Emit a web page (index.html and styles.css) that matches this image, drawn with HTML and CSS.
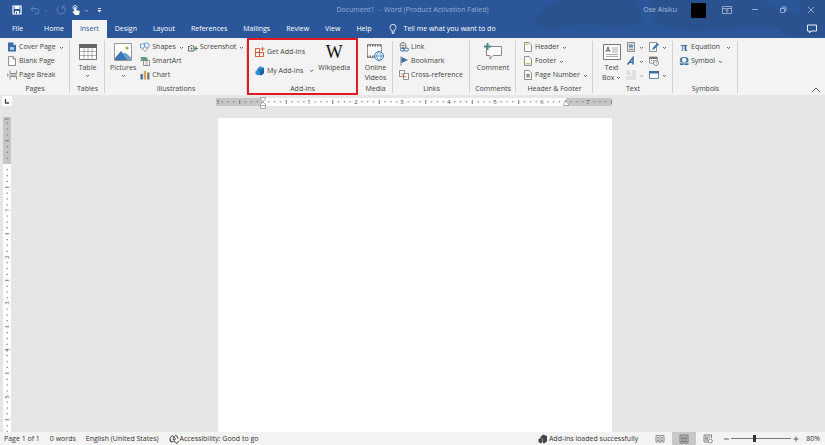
FILE: index.html
```html
<!DOCTYPE html>
<html lang="en">
<head>
    <meta charset="UTF-8">
    <meta name="viewport" content="width=device-width, initial-scale=1.0">
    <title>Document1 - Word</title>
    <link rel="stylesheet" href="styles.css">
</head>
<body>
    <svg class="defs" aria-hidden="true">
        <symbol id="caret" viewBox="0 0 5 5"><path d="M1 2l1.5 1.5L4 2" fill="none" stroke="currentColor" stroke-width=".8"/></symbol>
    </svg>

    <header class="app-header">
        <svg class="clouds" viewBox="0 0 290 38" aria-hidden="true">
            <path d="M2 24C0 12 14 2 30 0h70c8 6 2 12 10 18 4 6-20 10-40 8-14-2-20-4-34 0-16 4-32 4-34-2z"/>
            <path d="M118 0h110c8 4 6 10 26 12 16 2 14 10 6 14-20 4-40-2-60 2-24 4-60 4-74-2-10-6-12-16-8-26z"/>
            <path d="M254 20c-8 2-12 8-8 12 8 6 30 4 44 4V0h-24c0 10-4 18-12 20z"/>
        </svg>

        <div class="title-bar">
            <div class="quick-access">
                <button class="icon-btn" aria-label="Save">
                    <svg class="ico" viewBox="0 0 10 10"><path d="M1 1h8v8H1z" fill="none" stroke="#fff" stroke-width="1.2"/><path d="M2.5 1h5v3h-5zM3 6h4v3H3z" fill="#fff"/><path d="M4 7h1v2H4z" fill="#2b579a"/></svg>
                </button>
                <button class="icon-btn dim" aria-label="Undo">
                    <svg class="ico" viewBox="0 0 10 10"><path d="M3.5 1L1 3.5 3.5 6M1 3.5h5a2.5 2.5 0 0 1 0 5.5H5" fill="none" stroke="currentColor"/></svg>
                    <svg class="caret"><use href="#caret"/></svg>
                </button>
                <button class="icon-btn dim" aria-label="Repeat">
                    <svg class="ico" viewBox="0 0 10 10"><path d="M3 1.5a4 4 0 1 0 4 0M9.500 1H6.500v3" fill="none" stroke="currentColor"/></svg>
                </button>
                <button class="icon-btn touch" aria-label="Touch mode">
                    <svg class="ico" viewBox="0 0 10 10"><circle cx="4" cy="2.500" r="2" fill="none" stroke="#fff" stroke-width=".8"/><path d="M3.300 2h1.400v3l3.300.8c.7.2.8.7.6 1.300L8 10H4L1.500 6.800l.8-.8 1 .8z" fill="#fff"/></svg>
                    <svg class="caret"><use href="#caret"/></svg>
                </button>
                <button class="icon-btn" aria-label="Customize toolbar">
                    <svg class="caret" viewBox="0 0 5 5"><path d="M1 .5h3" stroke="#fff" stroke-width=".8"/><path d="M.5 2h4l-2 2.500z" fill="#fff"/></svg>
                </button>
            </div>
            <div class="doc-title">Document1 &nbsp;-&nbsp; Word (Product Activation Failed)</div>
            <div class="window-tools">
                <span class="user-name">Ose Aisiku</span>
                <span class="avatar"></span>
                <button class="win-btn" aria-label="Ribbon display options"><svg class="ico" viewBox="0 0 10 10"><path d="M.5 1.500h9v7h-9zM.5 3.500h9M5 8V4.500M3.500 6L5 4.500 6.500 6" fill="none" stroke="currentColor" stroke-width=".8"/></svg></button>
                <button class="win-btn" aria-label="Minimize"><svg class="ico" viewBox="0 0 10 10"><path d="M2 4.500h6" stroke="currentColor" stroke-width=".8"/></svg></button>
                <button class="win-btn" aria-label="Restore"><svg class="ico" viewBox="0 0 10 10"><path d="M2.500 3.500h4v4h-4zM4 3.500V2h4v4H6.500" fill="none" stroke="currentColor" stroke-width=".8"/></svg></button>
                <button class="win-btn" aria-label="Close"><svg class="ico" viewBox="0 0 10 10"><path d="M2 2l6 6M8 2L2 8" stroke="currentColor" stroke-width=".8"/></svg></button>
            </div>
        </div>

        <nav class="tabs">
            <button class="tab file">File</button>
            <button class="tab">Home</button>
            <button class="tab active">Insert</button>
            <button class="tab">Design</button>
            <button class="tab">Layout</button>
            <button class="tab">References</button>
            <button class="tab">Mailings</button>
            <button class="tab">Review</button>
            <button class="tab">View</button>
            <button class="tab">Help</button>
            <button class="tab tell-me">
                <svg class="ico" viewBox="0 0 10 10"><path d="M3.500 7C3.500 5.500 2 5 2 3.300a3 3 0 0 1 6 0C8 5 6.500 5.500 6.500 7zM3.500 8.300h3M4 9.600h2" fill="none" stroke="#fff" stroke-width=".8"/></svg>
                Tell me what you want to do
            </button>
            <button class="comments-btn" aria-label="Comments"><svg class="ico" viewBox="0 0 10 10"><path d="M.5 1h9v6H4L2.500 9V7h-2z" fill="none" stroke="#fff" stroke-width=".9"/></svg></button>
        </nav>
    </header>

    <section class="ribbon">
        <div class="group pages">
            <div class="group-body">
                <div class="stack">
                    <button class="cmd"><svg class="ico" viewBox="0 0 10 10"><path d="M1 .5h5.500L9 3v6.500H1z" fill="#3a6ea5"/><path d="M6.500.5V3H9z" fill="#fff"/><path d="M3 5h4v3H3z" fill="#a9c6e3"/></svg>Cover Page<svg class="caret"><use href="#caret"/></svg></button>
                    <button class="cmd"><svg class="ico" viewBox="0 0 10 10"><path d="M1.500.5h4.500l2.500 2.500v6.500h-7zM6 .5V3h2.500" fill="#fff" stroke="#777" stroke-width=".8"/></svg>Blank Page</button>
                    <button class="cmd"><svg class="ico" viewBox="0 0 10 10"><path d="M3 .5V3.500h6.500V.5M3 9.500V6.500h6.500v3M2.500 5H10M0 5h2M0 3v4" fill="none" stroke="#777" stroke-width=".8"/></svg>Page Break</button>
                </div>
            </div>
            <div class="group-label">Pages</div>
        </div>

        <div class="group tables">
            <div class="group-body">
                <button class="big">
                    <svg class="big-ico" viewBox="0 0 18 18"><path d="M.5 1.500h17v15H.5z" fill="#fff" stroke="#777"/><path d="M0 1h18v4H0z" fill="#666"/><path d="M1 8.500h16M1 12.500h16M5 5v11M9 5v11M13 5v11" stroke="#999" stroke-width=".8"/></svg>
                    <span>Table</span>
                    <svg class="caret"><use href="#caret"/></svg>
                </button>
            </div>
            <div class="group-label">Tables</div>
        </div>

        <div class="group illustrations">
            <div class="group-body">
                <button class="big">
                    <svg class="big-ico" viewBox="0 0 18 18"><path d="M.5.5h17v17H.5z" fill="#fff" stroke="#999"/><circle cx="13" cy="5" r="1.500" fill="#8db04a"/><path d="M1 15l6-7 4 5 2-2 4 4v2H1z" fill="#3a78b5"/><path d="M9 11l2-1.500 6 5.500v2h-4z" fill="#71a3d0"/></svg>
                    <span>Pictures</span>
                    <svg class="caret"><use href="#caret"/></svg>
                </button>
                <div class="stack">
                    <button class="cmd"><svg class="ico" viewBox="0 0 10 10"><circle cx="6.500" cy="3.500" r="2.800" fill="#e7f0fa" stroke="#4a86c5" stroke-width=".8"/><path d="M.5 2h4v4h-4z" fill="#fff" stroke="#4a86c5" stroke-width=".8"/><path d="M5 4.500L7.500 7 5 9.500 2.500 7z" fill="#fff" stroke="#777" stroke-width=".8"/></svg>Shapes<svg class="caret"><use href="#caret"/></svg></button>
                    <button class="cmd"><svg class="ico" viewBox="0 0 10 10"><path d="M0 1h6l2 2-2 2H0l1.500-2z" fill="#5b9b80"/><path d="M3.500 4.500h6v5h-6z" fill="#fff" stroke="#777" stroke-width=".8"/><path d="M5 6h3M5 8h3" stroke="#777" stroke-width=".7"/></svg>SmartArt</button>
                    <button class="cmd"><svg class="ico" viewBox="0 0 10 10"><path d="M.5 4h2.300v5.500H.5z" fill="#3a6ea5"/><path d="M3.800 1h2.300v8.500H3.800z" fill="#e3a24f"/><path d="M7.200 2.500h2.300v7H7.200z" fill="#777"/></svg>Chart</button>
                </div>
                <div class="stack">
                    <button class="cmd"><svg class="ico" viewBox="0 0 10 10"><path d="M.5 4.500h1.500l.7-1h1.600l.7 1h1v4.500H.5z" fill="none" stroke="#666"/><circle cx="3.500" cy="6.500" r="1" fill="#666"/><path d="M8 4.500v4M6 6.500h4" stroke="#3f8b68" stroke-width="1.200"/></svg>Screenshot<svg class="caret"><use href="#caret"/></svg></button>
                </div>
            </div>
            <div class="group-label">Illustrations</div>
        </div>

        <div class="group addins">
            <div class="group-body">
                <div class="stack roomy">
                    <button class="cmd"><svg class="ico" viewBox="0 0 10 10"><path d="M.5 1.500h4v8h-4zM.5 5.500h8v4h-8zM7.500 0v4M5.500 2h4" fill="none" stroke="#d8613c"/></svg>Get Add-ins</button>
                    <button class="cmd"><svg class="ico" viewBox="0 0 10 10"><path d="M5 .5l4 1.500v5.500L6 9.500 3 8V4L2 3.500z" fill="#1266a8"/><path d="M.5 5L3 4l2 1v3L3 9.500.5 8z" fill="#2f8fd8"/><path d="M5 .5l4 1.500-2.500 1.500L2 3.500z" fill="#2f8fd8"/></svg>My Add-ins<svg class="caret far"><use href="#caret"/></svg></button>
                </div>
                <button class="big">
                    <span class="wiki-mark" aria-hidden="true">W</span>
                    <span>Wikipedia</span>
                </button>
            </div>
            <div class="group-label">Add-ins</div>
        </div>

        <div class="group media">
            <div class="group-body">
                <button class="big">
                    <svg class="big-ico" viewBox="0 0 18 18"><path d="M1.500 1.500h14v13h-14z" fill="#fff" stroke="#999"/><path d="M1 2.500h15M1 13.500h9" stroke="#666" stroke-width="2" stroke-dasharray="1.500 1"/><circle cx="13" cy="13" r="4.500" fill="#e9f2fb" stroke="#3f7fbd"/><path d="M8.500 13h9M13 8.500c-3 3-3 6 0 9M13 8.500c3 3 3 6 0 9" fill="none" stroke="#3f7fbd" stroke-width=".7"/></svg>
                    <span>Online<br>Videos</span>
                </button>
            </div>
            <div class="group-label">Media</div>
        </div>

        <div class="group links">
            <div class="group-body">
                <div class="stack">
                    <button class="cmd"><svg class="ico" viewBox="0 0 10 10"><circle cx="4" cy="3.500" r="3" fill="#fff" stroke="#666" stroke-width=".8"/><path d="M1 3.500h6M4 .5v6" stroke="#666" stroke-width=".6"/><rect x="1.500" y="6" width="4" height="3" rx="1.500" fill="none" stroke="#3a6ea5"/><rect x="5" y="6" width="4.500" height="3" rx="1.500" fill="none" stroke="#3a6ea5"/></svg>Link</button>
                    <button class="cmd"><svg class="ico" viewBox="0 0 10 10"><path d="M2 .5v9" stroke="#777"/><path d="M2.500 1L9 4 2.500 7z" fill="#3a6ea5"/></svg>Bookmark</button>
                    <button class="cmd"><svg class="ico" viewBox="0 0 10 10"><path d="M.5.5h5v6h-5z" fill="#fff" stroke="#777" stroke-width=".8"/><path d="M4.500 3.500h5v6h-5z" fill="#fff" stroke="#777" stroke-width=".8"/><path d="M1.500 4h4M7 6.500H3.500M5 5l-1.500 1.500L5 8" fill="none" stroke="#c0694a" stroke-width=".8"/></svg>Cross-reference</button>
                </div>
            </div>
            <div class="group-label">Links</div>
        </div>

        <div class="group comments">
            <div class="group-body">
                <button class="big">
                    <svg class="big-ico" viewBox="0 0 18 18"><path d="M2.500 3.500h15v9H9L6 16v-3.500H2.500z" fill="#fff" stroke="#888"/><path d="M3.500 0v7M0 3.500h7" stroke="#4f8a86" stroke-width="2"/></svg>
                    <span>Comment</span>
                </button>
            </div>
            <div class="group-label">Comments</div>
        </div>

        <div class="group header-footer">
            <div class="group-body">
                <div class="stack">
                    <button class="cmd"><svg class="ico" viewBox="0 0 10 10"><path d="M1.500.5h4.500l2.500 2.500v6.500h-7z" fill="#fff" stroke="#777" stroke-width=".8"/><path d="M2.500 1.500h3v1.500h-3z" fill="#d3bd6a"/></svg>Header<svg class="caret"><use href="#caret"/></svg></button>
                    <button class="cmd"><svg class="ico" viewBox="0 0 10 10"><path d="M1.500.5h4.500l2.500 2.500v6.500h-7z" fill="#fff" stroke="#777" stroke-width=".8"/><path d="M2.500 7h5v1.500h-5z" fill="#d3bd6a"/></svg>Footer<svg class="caret"><use href="#caret"/></svg></button>
                    <button class="cmd"><svg class="ico" viewBox="0 0 10 10"><path d="M1.500.5h4.500l2.500 2.500v6.500h-7z" fill="#fff" stroke="#777" stroke-width=".8"/><path d="M4.300 3.500v4M5.800 3.500v4M3 4.800h4M3 6.300h4" stroke="#555" stroke-width=".6"/></svg>Page Number<svg class="caret"><use href="#caret"/></svg></button>
                </div>
            </div>
            <div class="group-label">Header &amp; Footer</div>
        </div>

        <div class="group text">
            <div class="group-body">
                <button class="big">
                    <svg class="big-ico" viewBox="0 0 18 18"><path d="M.5 1.500h17v15H.5z" fill="#fff" stroke="#777"/><path d="M3 9l2-5 2 5M3.700 7.500h2.600" fill="none" stroke="#555" stroke-width=".9"/><path d="M9 5h6M9 7h6M9 9h6M3 11.500h12M3 13.500h12" stroke="#999" stroke-width=".8"/></svg>
                    <span>Text<br>Box <svg class="caret"><use href="#caret"/></svg></span>
                </button>
                <div class="stack">
                    <button class="cmd" aria-label="Quick Parts"><svg class="ico" viewBox="0 0 10 10"><path d="M1.500.5h7v9h-7z" fill="#ddd" stroke="#777" stroke-width=".8"/><path d="M3 2.500h4v3H3z" fill="#6d8fb3"/><path d="M3 7.500h4" stroke="#777" stroke-width=".8"/></svg><svg class="caret"><use href="#caret"/></svg></button>
                    <button class="cmd" aria-label="WordArt"><svg class="ico" viewBox="0 0 10 10"><path d="M1.500 8.500L7 1.500v7M3.500 6.200h4" fill="none" stroke="#3a6ea5" stroke-width="1.500"/></svg><svg class="caret"><use href="#caret"/></svg></button>
                    <button class="cmd faded" aria-label="Drop Cap"><svg class="ico" viewBox="0 0 10 10"><path d="M.5 5l2-4.500 2 4.500M1.300 3.500h2.500M6 1h4M6 3h4M6 5h4M0 7h10M0 9h10" fill="none" stroke="#999" stroke-width=".8"/></svg><svg class="caret"><use href="#caret"/></svg></button>
                </div>
                <div class="stack">
                    <button class="cmd" aria-label="Signature Line"><svg class="ico" viewBox="0 0 10 10"><path d="M.5.5h7v9h-7z" fill="#fff" stroke="#777" stroke-width=".8"/><path d="M3 8l1-2.500L8.500 1 10 2.500 5.500 7z" fill="#3a78b5"/></svg><svg class="caret"><use href="#caret"/></svg></button>
                    <button class="cmd" aria-label="Date and Time"><svg class="ico" viewBox="0 0 10 10"><path d="M.5 1h7.500v6H.5z" fill="#fff" stroke="#777" stroke-width=".8"/><path d="M0 1h8.500v2H0zM2 4h1v1H2zM4 4h1v1H4z" fill="#777"/><circle cx="7" cy="7" r="2.500" fill="#fff" stroke="#777" stroke-width=".8"/><path d="M7 5.500V7h1.300" fill="none" stroke="#777" stroke-width=".7"/></svg></button>
                    <button class="cmd" aria-label="Object"><svg class="ico" viewBox="0 0 10 10"><path d="M.5 1.500h9v7h-9z" fill="#fff" stroke="#3a6ea5" stroke-width=".8"/><path d="M0 1h10v2.500H0z" fill="#3a6ea5"/></svg><svg class="caret"><use href="#caret"/></svg></button>
                </div>
            </div>
            <div class="group-label">Text</div>
        </div>

        <div class="group symbols">
            <div class="group-body">
                <div class="stack">
                    <button class="cmd"><span class="sign">π</span>Equation<svg class="caret far"><use href="#caret"/></svg></button>
                    <button class="cmd"><span class="sign">Ω</span>Symbol<svg class="caret"><use href="#caret"/></svg></button>
                </div>
            </div>
            <div class="group-label">Symbols</div>
        </div>

        <button class="collapse" aria-label="Collapse the ribbon"><svg class="ico" viewBox="0 0 10 10"><path d="M1 7l4-4 4 4" fill="none" stroke="#555" stroke-width=".9"/></svg></button>
    </section>

    <main class="workspace">
        <div class="corner"><button class="tab-stop" aria-label="Tab stop"><svg class="ico" viewBox="0 0 10 10"><path d="M3.500 3v4H7" fill="none" stroke="#444" stroke-width="1.300"/></svg></button></div>
        <div class="ruler-row">
            <svg class="ruler" viewBox="0 0 398 14" aria-hidden="true">
                <defs>
                    <pattern id="inch" x="47" y="0" width="46.500" height="14" patternUnits="userSpaceOnUse">
                        <path d="M5.800 6v1.500M11.600 6v1.500M17.400 6v1.500M29.100 6v1.500M34.900 6v1.500M40.700 6v1.500M23.250 5v4" stroke="#777"/>
                    </pattern>
                </defs>
                <path d="M0 3h396v8H0z" fill="#c6c6c6"/>
                <path d="M47 3h303v8H47z" fill="#fff"/>
                <path d="M3 3h393v8H3z" fill="url(#inch)"/>
                <g class="ruler-num">
                    <text x="2" y="9">1</text><text x="93" y="9">1</text><text x="140" y="9">2</text><text x="186" y="9">3</text><text x="233" y="9">4</text><text x="279" y="9">5</text><text x="326" y="9">6</text><text x="372" y="9">7</text>
                </g>
                <path d="M44.500 2.500h5V4L47 7l-2.500-3zM47 7l2.500 2.500v4h-5v-4zM44.500 10.500h5M347.500 10.500V9l2.500-3 2.500 3v1.500z" fill="#fff" stroke="#888" stroke-width=".7"/>
            </svg>
        </div>
        <div class="side">
            <svg class="side-ruler" viewBox="0 0 8 560" aria-hidden="true">
                <defs>
                    <pattern id="inch-v" x="0" y="47" width="8" height="46.500" patternUnits="userSpaceOnUse">
                        <path d="M3.500 5.800H5M3.500 11.600H5M3.500 17.400H5M3.500 29.100H5M3.500 34.900H5M3.500 40.700H5M2 23.250h4" stroke="#777"/>
                    </pattern>
                </defs>
                <path d="M0 0h8v47H0z" fill="#c6c6c6"/>
                <path d="M0 47h8v513H0z" fill="#fff"/>
                <path d="M0 3h8v557H0z" fill="url(#inch-v)"/>
                <g class="ruler-num">
                    <text transform="translate(6 2) rotate(-90)">1</text><text transform="translate(6 93) rotate(-90)">1</text><text transform="translate(6 140) rotate(-90)">2</text><text transform="translate(6 186) rotate(-90)">3</text><text transform="translate(6 233) rotate(-90)">4</text><text transform="translate(6 280) rotate(-90)">5</text>
                </g>
            </svg>
        </div>
        <div class="canvas"><article class="page"></article></div>
    </main>

    <footer class="status-bar">
        <span class="status">Page 1 of 1</span>
        <span class="status">0 words</span>
        <span class="status">English (United States)</span>
        <span class="status"><svg class="ico" viewBox="0 0 10 10"><path d="M4 1.500A4 4 0 0 0 2 8M1 5.500L2 8l2.500-.5M6 1a4 4 0 0 1 3 3.500" fill="none" stroke="#444"/><circle cx="5" cy="3" r="1" fill="#444"/><path d="M3.500 5H7M5 5v2l3 2.500M10 7L8 9.500" fill="none" stroke="#444"/></svg>Accessibility: Good to go</span>
        <div class="status-right">
            <span class="status"><svg class="ico" viewBox="0 0 10 10"><path d="M5 .5l4 1.500v5.500L6 9.500 5 9V5L2 3.500z" fill="#444"/><path d="M.5 5L3 4l1.500 1v3L3 9.500.5 8z" fill="#444"/></svg>Add-ins loaded successfully</span>
            <div class="views">
                <button class="view-btn" aria-label="Read mode"><svg class="ico" viewBox="0 0 10 10"><path d="M1 1.500h3.200L5 2l.8-.5H9v6.500H5.800L5 8.500 4.200 8H1zM5 2v6M2 3.500h2M2 5h2M2 6.500h2M6 3.500h2M6 5h2M6 6.500h2" fill="none" stroke="#666" stroke-width=".7"/></svg></button>
                <button class="view-btn on" aria-label="Print layout"><svg class="ico" viewBox="0 0 10 10"><path d="M1 1h8v8H1zM2 3h6M2 4.500h6M2 6h6M2 7.500h6" fill="none" stroke="#666" stroke-width=".8"/></svg></button>
                <button class="view-btn" aria-label="Web layout"><svg class="ico" viewBox="0 0 10 10"><path d="M5 8H1V1h7.500v3M2 3h5M2 4.500h3M2 6h3" fill="none" stroke="#666" stroke-width=".8"/><circle cx="7.300" cy="7" r="2" fill="#fff" stroke="#666" stroke-width=".8"/></svg></button>
            </div>
            <div class="zoom">
                <button class="zoom-btn" aria-label="Zoom out"><svg class="ico" viewBox="0 0 10 10"><path d="M3 5h5" stroke="#444" stroke-width=".8"/></svg></button>
                <input class="zoom-slider" type="range" min="10" max="190" value="80" aria-label="Zoom">
                <button class="zoom-btn" aria-label="Zoom in"><svg class="ico" viewBox="0 0 10 10"><path d="M2.500 5h5M5 2.500v5" stroke="#444" stroke-width=".8"/></svg></button>
            </div>
            <span class="zoom-level">80%</span>
        </div>
    </footer>
</body>
</html>
```

FILE: styles.css
```css
* {
    margin: 0;
    padding: 0;
    box-sizing: border-box;
}

body {
    display: flex;
    flex-direction: column;
    height: 100vh;
    overflow: hidden;
    background: #e6e6e6;
    color: #444444;
    font-family: 'Open Sans', 'Noto Sans', sans-serif;
    font-size: 7px;
    line-height: 10px;
}

button {
    display: flex;
    align-items: center;
    border: 0;
    background: transparent;
    color: inherit;
    font: inherit;
    white-space: nowrap;
    cursor: pointer;
}

.defs {
    position: absolute;
    width: 0;
    height: 0;
}

.ico {
    flex: none;
    width: 10px;
    height: 10px;
}

.caret {
    flex: none;
    width: 5px;
    height: 5px;
}

/* title bar and tabs */
.app-header {
    position: relative;
    background: #2b579a;
    color: #ffffff;
}

.clouds {
    position: absolute;
    top: 0;
    right: 0;
    height: 38px;
    fill: #29528f;
}

.title-bar {
    position: relative;
    display: grid;
    grid-template-columns: 1fr auto 1fr;
    align-items: center;
    height: 20px;
}

.quick-access {
    display: flex;
    align-items: center;
    gap: 8px;
    padding-left: 12px;
}

.icon-btn {
    gap: 3px;
}

.dim {
    color: #5f82b8;
}

.touch {
    color: #a9bddb;
    margin-left: -3px;
}

.doc-title {
    color: #93abd0;
}

.window-tools {
    display: flex;
    align-items: center;
    justify-content: flex-end;
    padding-right: 9px;
    color: #a9bddb;
}

.avatar {
    width: 15px;
    height: 15px;
    margin: 0 16px 0 14px;
    background: #000000;
}

.win-btn + .win-btn {
    margin-left: 18px;
}

.tabs {
    position: relative;
    display: flex;
    height: 18px;
}

.tab {
    padding: 0 8px;
}

.tab.file {
    padding: 0 13px 0 12px;
}

.tab.active {
    background: #f3f3f3;
    color: #2b579a;
}

.tell-me {
    gap: 6px;
}

.comments-btn {
    margin-left: auto;
    padding-right: 8px;
}

/* ribbon */
.ribbon {
    display: flex;
    background: #f3f3f3;
}

.group {
    position: relative;
    display: flex;
    flex-direction: column;
    flex: none;
    padding-top: 2px;
}

.group::after {
    content: '';
    position: absolute;
    top: 3px;
    right: 0;
    bottom: 2px;
    width: 1px;
    background: #d2d2d2;
}

.group-body {
    display: flex;
    flex: none;
    height: 42px;
}

.group-label {
    line-height: 13px;
    text-align: center;
}

.stack {
    display: flex;
    flex-direction: column;
}

.cmd {
    height: 14px;
    gap: 2px;
}

.cmd .caret {
    margin-left: 1px;
}

.cmd .caret.far {
    margin-left: 4px;
}

.roomy {
    padding-top: 2px;
}

.roomy .cmd {
    height: 19px;
}

.big {
    flex-direction: column;
    text-align: center;
}

.big-ico {
    flex: none;
    width: 18px;
    height: 18px;
    margin: 3px 0 2px;
}

.faded {
    opacity: 0.5;
}

.sign {
    width: 10px;
    color: #3a6ea5;
    font-family: 'Liberation Serif', serif;
    font-size: 12px;
    font-weight: bold;
    text-align: center;
}

.wiki-mark {
    height: 23px;
    color: #111111;
    font-family: 'Liberation Serif', serif;
    font-size: 18px;
    line-height: 24px;
}

.pages {
    width: 70px;
}

.pages .group-body {
    padding-left: 7px;
}

.tables {
    width: 35px;
}

.tables .group-body,
.media .group-body,
.comments .group-body {
    justify-content: center;
}

.illustrations {
    width: 142px;
}

.illustrations .group-body {
    padding-left: 5px;
    gap: 4px;
}

.addins {
    width: 111px;
}

.addins .group-body {
    padding-left: 8px;
    gap: 4px;
}

/* highlighted group */
.addins::after {
    top: 0;
    bottom: 0;
    left: 0;
    width: auto;
    background: none;
    border: 2px solid #e01b22;
    pointer-events: none;
}

.media {
    width: 35px;
}

.links {
    width: 77px;
}

.links .group-body {
    padding-left: 6px;
}

.comments {
    width: 46px;
}

.header-footer {
    width: 77px;
}

.header-footer .group-body {
    padding-left: 7px;
}

.text {
    width: 80px;
}

.text .group-body {
    padding-left: 9px;
    gap: 5px;
}

.symbols {
    width: 65px;
}

.symbols .group-body {
    padding-left: 6px;
}

.collapse {
    align-self: flex-end;
    margin-left: auto;
    padding-right: 4px;
}

/* document area */
.workspace {
    display: grid;
    grid-template-columns: 13px 1fr;
    grid-template-rows: 22px 1fr;
    flex: 1;
    min-height: 0;
    padding-right: 8px;
}

.corner {
    padding: 1px 0 0 2px;
}

.tab-stop {
    background: #ffffff;
}

.ruler-row {
    display: flex;
    justify-content: center;
}

.ruler {
    width: 398px;
    height: 14px;
}

.ruler-num {
    fill: #444444;
    font-size: 6px;
    text-anchor: middle;
}

.side {
    min-height: 0;
    overflow: hidden;
    padding-left: 3px;
}

.side-ruler {
    display: block;
    width: 8px;
    height: 560px;
}

.canvas {
    display: flex;
    justify-content: center;
    min-height: 0;
    overflow: hidden;
}

.page {
    width: 394px;
    height: 510px;
    margin-top: 1px;
    background: #ffffff;
}

/* status bar */
.status-bar {
    display: flex;
    align-items: center;
    gap: 10px;
    height: 13px;
    padding: 0 5px 0 4px;
    background: #f3f3f3;
    color: #333333;
}

.status {
    display: flex;
    align-items: center;
    gap: 1px;
}

.status-right {
    display: flex;
    align-items: center;
    margin-left: auto;
}

.views {
    display: flex;
    margin: 0 1px 0 10px;
}

.view-btn {
    justify-content: center;
    width: 24px;
    height: 13px;
}

.view-btn.on {
    background: #c8c8c8;
}

.zoom {
    display: flex;
    align-items: center;
    margin-right: 5px;
}

.zoom-slider {
    appearance: none;
    width: 60px;
    height: 10px;
    background: linear-gradient(#777777, #777777) center / 100% 1px no-repeat;
}

.zoom-slider::-webkit-slider-thumb {
    appearance: none;
    width: 3px;
    height: 7px;
    background: #333333;
}
```
